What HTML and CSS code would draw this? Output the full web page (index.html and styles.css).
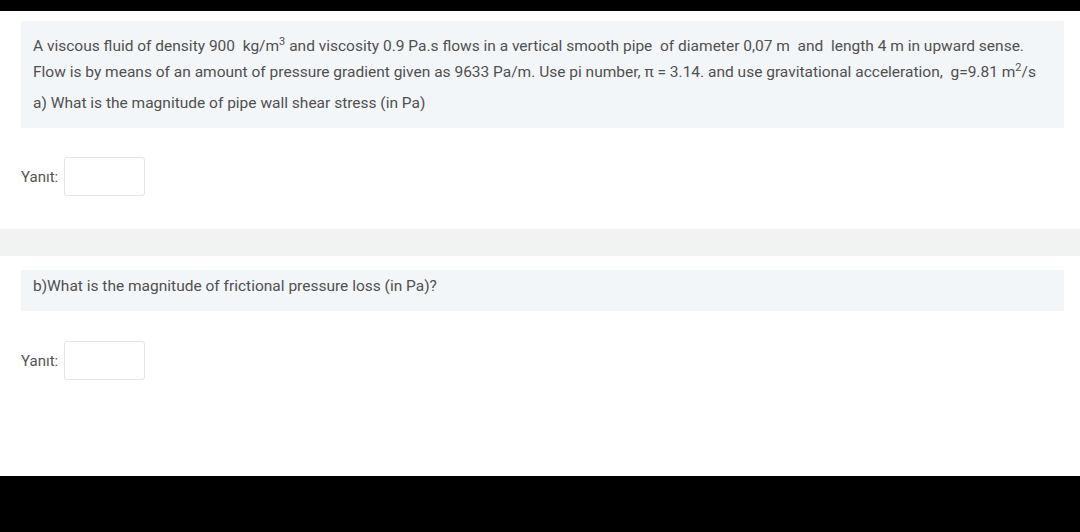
FILE: index.html
```html
<!DOCTYPE html>
<html lang="tr">
<head>
<meta charset="utf-8">
<title>Soru</title>
<link rel="stylesheet" href="styles.css">
</head>
<body>
<div class="topbar"></div>
<main class="page">
  <section class="qtext first">
    <p class="line">A viscous fluid of density 900&nbsp; kg/m<sup>3</sup> and viscosity 0.9 Pa.s flows in a vertical smooth pipe&nbsp; of diameter 0,07 m&nbsp; and&nbsp; length 4 m in upward sense.<br>Flow is by means of an amount of pressure gradient given as 9633 Pa/m. Use pi number, π = 3.14. and use gravitational acceleration,&nbsp; g=9.81 m<sup>2</sup>/s</p>
    <p class="line">a) What is the magnitude of pipe wall shear stress (in Pa)</p>
  </section>
  <div class="answer a1">
    <label class="label">Yanıt:</label>
    <span class="input"></span>
  </div>
  <div class="band"></div>
  <section class="qtext second">
    <p class="line">b)What is the magnitude of frictional pressure loss (in Pa)?</p>
  </section>
  <div class="answer a2">
    <label class="label">Yanıt:</label>
    <span class="input"></span>
  </div>
</main>
<div class="bottombar"></div>
</body>
</html>
```
FILE: styles.css
```css
html, body {
  margin: 0;
  padding: 0;
  background: #fff;
}
body {
  width: 1080px;
  height: 532px;
  overflow: hidden;
  font-family: Roboto, "Liberation Sans", sans-serif;
  font-size: 15.5px;
  color: #505050;
}
.topbar {
  height: 11px;
  background: #000;
}
.page {
  height: 465px;
  box-sizing: border-box;
  padding-top: 10px;
  display: flex;
  flex-direction: column;
}
.qtext {
  margin-left: 21px;
  width: 1043px;
  box-sizing: border-box;
  background: #f3f6f9;
  padding: 12px 12px;
}
.qtext.first {
  height: 107px;
}
.qtext.second {
  margin-top: 14px;
  height: 41px;
  padding-top: 3px;
}
.line {
  margin: 0 0 5px 0;
  line-height: 26px;
}
.line:last-child {
  margin-bottom: 0;
}
sup {
  font-size: 11px;
  line-height: 0;
  vertical-align: 6px;
}
.answer {
  display: flex;
  align-items: center;
  margin-left: 21px;
  height: 39px;
}
.a1 { margin-top: 29px; }
.a2 { margin-top: 30px; }
.label {
  width: 43px;
  color: #555;
  font-size: 15px;
}
.input {
  width: 81px;
  height: 39px;
  box-sizing: border-box;
  border: 1px solid #e3e5e8;
  border-radius: 3px;
  background: #fff;
}
.band {
  margin-top: 33px;
  height: 27px;
  background: #f1f3f3;
}
.bottombar {
  height: 56px;
  background: #000;
}
```
